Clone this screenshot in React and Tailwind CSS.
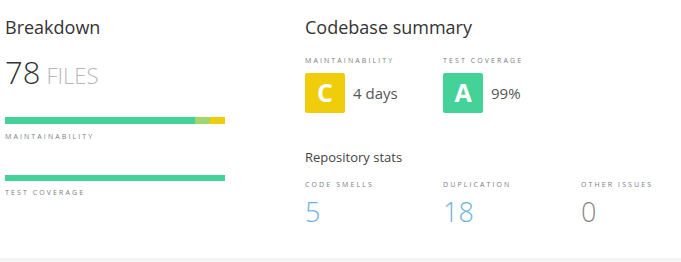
import React from "react";

const font = { fontFamily: "'Open Sans', 'Liberation Sans', sans-serif" };

const Label = ({ children }) => (
  <div className="text-[7px] leading-[8px] tracking-[0.3em] text-[#7b7b86] uppercase whitespace-nowrap">{children}</div>
);

const Badge = ({ grade, color }) => (
  <div className={`w-10 h-10 rounded-[2px] flex items-center justify-center text-white text-[25px] font-bold ${color}`}>
    {grade}
  </div>
);

const Stat = ({ label, value, color, last }) => (
  <div className={last ? "w-[90px]" : "w-[138px]"}>
    <Label>{label}</Label>
    <div className={`mt-[8px] text-[27px] leading-[30px] font-light ${color}`}>{value}</div>
  </div>
);

const App = () => {
  return (
    <div className="w-[681px] h-[262px] bg-white flex flex-col overflow-hidden" style={font}>
      <div className="flex flex-1 pt-[16px]">
        <div className="w-[220px] ml-[5px]">
          <h2 className="text-[18px] leading-[22px] text-[#333]">Breakdown</h2>
          <div className="mt-[17px] flex items-baseline gap-[6px]">
            <span className="text-[31px] leading-[34px] font-light text-[#333]">78</span>
            <span className="text-[22px] leading-[26px] font-light text-[#b6b6bc]">FILES</span>
          </div>
          <div className="mt-[28px] flex h-[7px]">
            <div className="w-[190px] bg-[#45d298]" />
            <div className="w-[15px] bg-[#a3d66a]" />
            <div className="w-[15px] bg-[#f0cd0a]" />
          </div>
          <div className="mt-[9px]">
            <Label>Maintainability</Label>
          </div>
          <div className="mt-[34px] h-[6px] bg-[#45d298]" />
          <div className="mt-[8px]">
            <Label>Test coverage</Label>
          </div>
        </div>
        <div className="ml-[80px]">
          <h2 className="text-[18px] leading-[22px] text-[#333]">Codebase summary</h2>
          <div className="mt-[19px] flex">
            <div className="w-[138px]">
              <Label>Maintainability</Label>
              <div className="mt-[8px] flex items-center gap-2">
                <Badge grade="C" color="bg-[#f0cd0a]" />
                <span className="text-[15px] text-[#555]">4 days</span>
              </div>
            </div>
            <div>
              <Label>Test coverage</Label>
              <div className="mt-[8px] flex items-center gap-2">
                <Badge grade="A" color="bg-[#45d298]" />
                <span className="text-[15px] text-[#555]">99%</span>
              </div>
            </div>
          </div>
          <div className="mt-[36px] text-[13px] leading-[16px] text-[#444]">Repository stats</div>
          <div className="mt-[16px] flex">
            <Stat label="Code smells" value="5" color="text-[#6fb0dd]" />
            <Stat label="Duplication" value="18" color="text-[#6fb0dd]" />
            <Stat label="Other issues" value="0" color="text-[#888]" last />
          </div>
        </div>
      </div>
      <div className="h-[4px] bg-[#f4f4f4]" />
    </div>
  );
};

export default App;
